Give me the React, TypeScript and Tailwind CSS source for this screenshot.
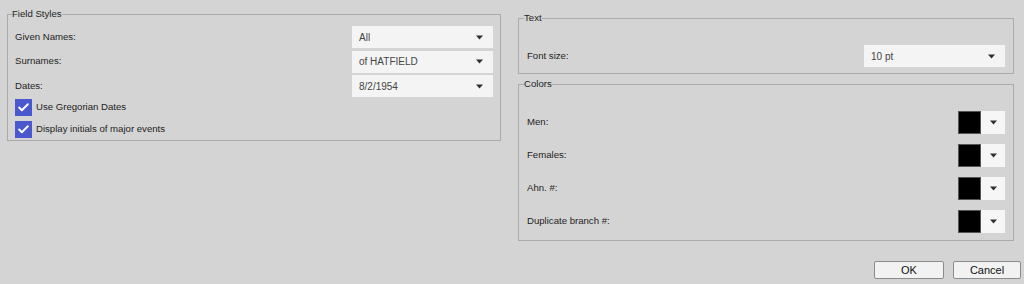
import { Check } from 'lucide-react';

function Caret() {
  return (
    <svg width="7" height="5" viewBox="0 0 7 5" className="shrink-0">
      <path d="M0 0.5 H7 L3.5 4.5 Z" fill="#2e2e2e" />
    </svg>
  );
}

function Dropdown({ value, width }: { value: string; width: string }) {
  return (
    <div className={`${width} h-[22px] bg-[#f4f4f4] flex items-center justify-between pl-[7px] pr-[10px]`}>
      <span className="text-[10px] text-[#444]">{value}</span>
      <Caret />
    </div>
  );
}

function ColorPicker() {
  return (
    <div className="w-[47px] h-[23px] bg-[#f6f6f6] flex">
      <div className="w-[23px] h-full bg-black border border-[#555]" />
      <div className="flex-1 flex items-center justify-center">
        <Caret />
      </div>
    </div>
  );
}

function CheckRow({ label, className }: { label: string; className: string }) {
  return (
    <div className={`flex items-center gap-[4px] ${className}`}>
      <div className="w-[17px] h-[17px] bg-[#4a58cf] flex items-center justify-center">
        <Check size={13} strokeWidth={3.5} color="#fff" />
      </div>
      <span>{label}</span>
    </div>
  );
}

export default function App() {
  const fieldRows = [
    { label: 'Given Names:', value: 'All' },
    { label: 'Surnames:', value: 'of HATFIELD' },
    { label: 'Dates:', value: '8/2/1954' },
  ];
  const colorRows = ['Men:', 'Females:', 'Ahn. #:', 'Duplicate branch #:'];

  return (
    <div className="w-[1024px] h-[284px] bg-[#d4d4d4] text-[#1e1e1e] text-[9.6px] font-['Liberation_Sans',Arial,sans-serif] flex flex-col overflow-hidden">
      <div className="flex items-start pl-[7px]">
        {/* Field styles */}
        <fieldset className="w-[494px] mt-[8px] border border-[#ababab] px-[7px] pt-[6px] pb-[2px]">
          <legend className="-ml-[3px] leading-[12px]">Field Styles</legend>
          <div className="flex flex-col gap-[2.5px]">
            {fieldRows.map((r) => (
              <div key={r.label} className="flex items-center justify-between h-[22px]">
                <span>{r.label}</span>
                <Dropdown value={r.value} width="w-[141px]" />
              </div>
            ))}
          </div>
          <CheckRow label="Use Gregorian Dates" className="mt-[2px]" />
          <CheckRow label="Display initials of major events" className="mt-[5px]" />
        </fieldset>

        <div className="ml-[17px] w-[496px] flex flex-col">
          {/* Text */}
          <fieldset className="mt-[12px] border border-[#ababab] pl-[8px] pr-[8px] pt-[21px] pb-[6px]">
            <legend className="-ml-[3px] leading-[12px]">Text</legend>
            <div className="flex items-center justify-between h-[22px]">
              <span>Font size:</span>
              <Dropdown value="10 pt" width="w-[141px]" />
            </div>
          </fieldset>

          {/* Colors */}
          <fieldset className="mt-[4px] border border-[#ababab] pl-[8px] pr-[8px] pt-[21px] pb-[7px]">
            <legend className="-ml-[3px] leading-[12px]">Colors</legend>
            <div className="flex flex-col gap-[10px]">
              {colorRows.map((c) => (
                <div key={c} className="flex items-center justify-between h-[23px]">
                  <span>{c}</span>
                  <ColorPicker />
                </div>
              ))}
            </div>
          </fieldset>
        </div>
      </div>

      <div className="flex justify-end gap-[9px] pr-[3px] mt-[20px]">
        <button className="w-[70px] h-[18px] bg-[#f2f2f2] border border-[#8c8c8c] rounded-[2px] text-[11px] text-[#111] leading-none">
          OK
        </button>
        <button className="w-[68px] h-[18px] bg-[#f2f2f2] border border-[#8c8c8c] rounded-[2px] text-[11px] text-[#111] leading-none">
          Cancel
        </button>
      </div>
    </div>
  );
}
